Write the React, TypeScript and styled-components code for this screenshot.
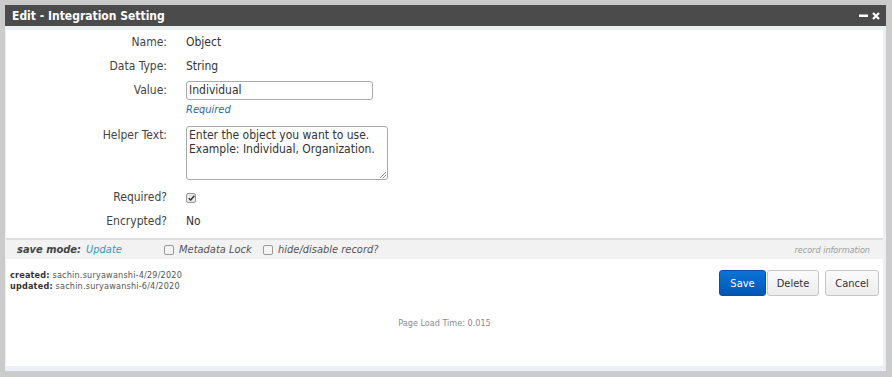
import * as React from 'react';
import styled, { createGlobalStyle } from 'styled-components';

const GlobalStyle = createGlobalStyle`
  html, body {
    margin: 0;
    padding: 0;
    background: #cbcbcb;
  }
  body {
    font-family: "DejaVu Sans Condensed", "DejaVu Sans", sans-serif;
    color: #333333;
  }
`;

const Frame = styled.div`
  padding: 5px 6px 6px 5px;
  height: 377px;
  box-sizing: border-box;
`;

const Window = styled.div`
  width: 881px;
  height: 366px;
  display: flex;
  flex-direction: column;
`;

const TitleBar = styled.div`
  height: 21px;
  background: #4b4b4b;
  color: #ffffff;
  display: flex;
  align-items: center;
  justify-content: space-between;
  padding: 0 6px 0 7px;
  font-weight: bold;
  font-size: 12px;
`;

const TitleTools = styled.div`
  display: flex;
  align-items: center;
  gap: 4px;
`;

const Body = styled.div`
  flex: 1;
  background: #ecf0f5;
  padding: 4px 3px 5px 1px;
  display: flex;
`;

const Panel = styled.div`
  flex: 1;
  background: #ffffff;
  display: flex;
  flex-direction: column;
`;

const Form = styled.div`
  padding-top: 0;
`;

const Row = styled.div<{ $pad?: number; $height?: number }>`
  display: grid;
  grid-template-columns: 161px 1fr;
  column-gap: 19px;
  min-height: ${p => p.$height ?? 24}px;
  font-size: 12px;
  line-height: 14px;
  padding-top: ${p => p.$pad ?? 5}px;
  box-sizing: border-box;
`;

const Label = styled.div`
  text-align: right;
  color: #444444;
`;

const Value = styled.div`
  color: #333333;
`;

const TextInput = styled.div`
  width: 187px;
  height: 19px;
  box-sizing: border-box;
  border: 1px solid #a9a9a9;
  border-radius: 3px;
  padding: 1px 2px;
  margin-top: -2px;
  font-size: 12px;
  line-height: 15px;
  color: #333333;
`;

const Hint = styled.div`
  font-style: italic;
  font-size: 11px;
  color: #2a6aa3;
  margin-top: 3px;
  padding-bottom: 4px;
`;

const TextArea = styled.div`
  position: relative;
  width: 202px;
  height: 54px;
  box-sizing: border-box;
  border: 1px solid #a9a9a9;
  border-radius: 3px;
  padding: 1px 2px 0;
  margin-top: -2px;
  font-size: 12px;
  line-height: 14px;
  color: #333333;
  white-space: pre;
`;

const Grip = styled.svg`
  position: absolute;
  right: 1px;
  bottom: 1px;
`;

const Check = styled.span<{ $checked?: boolean }>`
  display: inline-flex;
  align-items: center;
  justify-content: center;
  width: 10px;
  height: 10px;
  box-sizing: border-box;
  border: 1px solid #9a9a9a;
  border-radius: 2px;
  background: ${p => (p.$checked ? '#e8e8e8' : '#f4f4f4')};
  vertical-align: middle;
`;

const SaveBar = styled.div`
  margin-top: 5px;
  border-top: 2px solid #dedede;
  background: #f2f2f2;
  height: 19px;
  display: flex;
  align-items: center;
  padding: 0 13px 0 11px;
  font-size: 11px;
  font-style: italic;
`;

const BarItem = styled.span<{ $width?: number }>`
  display: inline-flex;
  align-items: center;
  gap: 5px;
  width: ${p => (p.$width ? `${p.$width}px` : 'auto')};
  color: #555555;
`;

const Strong = styled.span`
  font-weight: bold;
  color: #444444;
`;

const Link = styled.span`
  color: #3a97c2;
  margin-left: 0;
`;

const RecordInfo = styled.span`
  margin-left: auto;
  font-size: 9px;
  color: #9a9a9a;
`;

const Footer = styled.div`
  display: flex;
  justify-content: space-between;
  align-items: flex-start;
  padding: 11px 4px 0 4px;
`;

const Audit = styled.div`
  font-size: 9px;
  line-height: 11px;
  color: #555555;
  letter-spacing: 0.2px;
`;

const AuditKey = styled.span`
  font-weight: bold;
  color: #333333;
`;

const Buttons = styled.div`
  display: flex;
  gap: 1px;
`;

const Button = styled.button<{ $primary?: boolean; $gap?: number; $width: number }>`
  width: ${p => p.$width}px;
  height: 26px;
  box-sizing: border-box;
  padding: 0;
  margin-left: ${p => p.$gap ?? 0}px;
  font-family: inherit;
  font-size: 11px;
  border-radius: 3px;
  cursor: pointer;
  border: 1px solid ${p => (p.$primary ? '#0a4fa6' : '#c6c6c6')};
  color: ${p => (p.$primary ? '#ffffff' : '#333333')};
  background: ${p =>
    p.$primary
      ? 'linear-gradient(#0b74d6, #0055b4)'
      : 'linear-gradient(#fbfbfb, #ececec)'};
`;

const LoadTime = styled.div`
  text-align: center;
  font-size: 9px;
  color: #8a8a8a;
  margin-top: 22px;
`;

export default function App() {
  return (
    <>
      <GlobalStyle />
      <Frame>
        <Window>
          <TitleBar>
            <span>Edit - Integration Setting</span>
            <TitleTools>
              <svg width="9" height="9" viewBox="0 0 9 9">
                <rect x="0" y="3.5" width="9" height="2.5" fill="#ffffff" />
              </svg>
              <svg width="8" height="8" viewBox="0 0 8 8">
                <path d="M1 1 L7 7 M7 1 L1 7" stroke="#ffffff" strokeWidth="2.2" />
              </svg>
            </TitleTools>
          </TitleBar>
          <Body>
            <Panel>
              <Form>
                <Row>
                  <Label>Name:</Label>
                  <Value>Object</Value>
                </Row>
                <Row>
                  <Label>Data Type:</Label>
                  <Value>String</Value>
                </Row>
                <Row>
                  <Label>Value:</Label>
                  <div>
                    <TextInput>Individual</TextInput>
                    <Hint>Required</Hint>
                  </div>
                </Row>
                <Row $pad={7} $height={64}>
                  <Label>Helper Text:</Label>
                  <div>
                    <TextArea>
                      {'Enter the object you want to use.\nExample: Individual, Organization.'}
                      <Grip width="7" height="7" viewBox="0 0 7 7">
                        <path d="M1 7 L7 1 M4 7 L7 4" stroke="#777777" strokeWidth="0.8" />
                      </Grip>
                    </TextArea>
                  </div>
                </Row>
                <Row>
                  <Label>Required?</Label>
                  <Value>
                    <Check $checked>
                      <svg width="7" height="6" viewBox="0 0 7 6">
                        <path d="M0.8 3.2 L2.7 5 L6.3 0.8" stroke="#333333" strokeWidth="1.5" fill="none" />
                      </svg>
                    </Check>
                  </Value>
                </Row>
                <Row>
                  <Label>Encrypted?</Label>
                  <Value>No</Value>
                </Row>
              </Form>
              <SaveBar>
                <BarItem $width={147}>
                  <Strong>save mode:</Strong>
                  <Link>Update</Link>
                </BarItem>
                <BarItem $width={99}>
                  <Check />
                  Metadata Lock
                </BarItem>
                <BarItem>
                  <Check />
                  hide/disable record?
                </BarItem>
                <RecordInfo>record information</RecordInfo>
              </SaveBar>
              <Footer>
                <Audit>
                  <div>
                    <AuditKey>created:</AuditKey> sachin.suryawanshi-4/29/2020
                  </div>
                  <div>
                    <AuditKey>updated:</AuditKey> sachin.suryawanshi-6/4/2020
                  </div>
                </Audit>
                <Buttons>
                  <Button $primary $width={47}>Save</Button>
                  <Button $width={52}>Delete</Button>
                  <Button $gap={5} $width={54}>Cancel</Button>
                </Buttons>
              </Footer>
              <LoadTime>Page Load Time: 0.015</LoadTime>
            </Panel>
          </Body>
        </Window>
      </Frame>
    </>
  );
}
